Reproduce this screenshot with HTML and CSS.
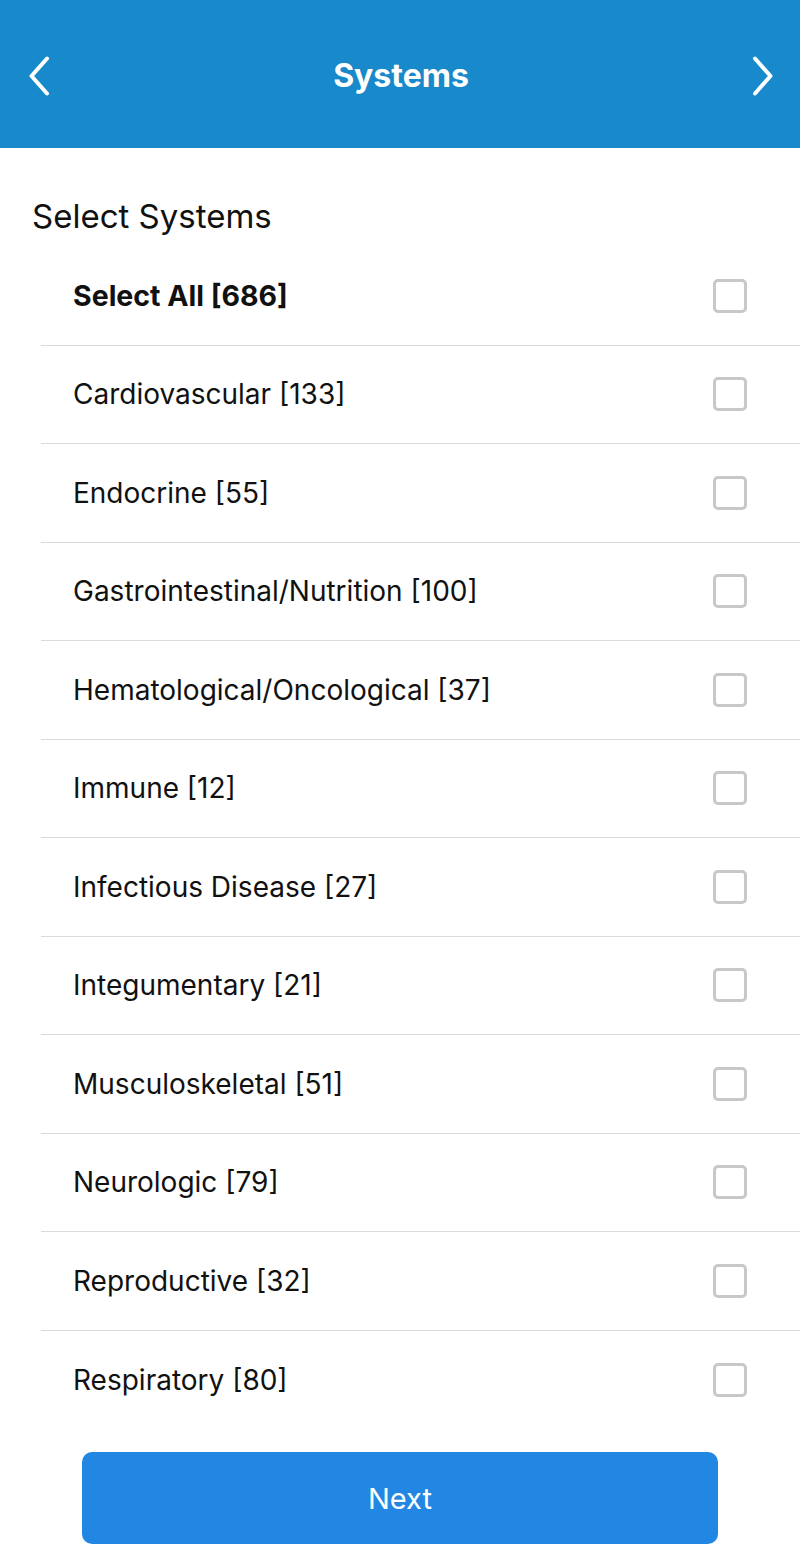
FILE: index.html
```html
<!DOCTYPE html>
<html lang="en">
<head>
<meta charset="utf-8">
<title>Systems</title>
<link rel="stylesheet" href="styles.css">
</head>
<body>
<header class="nav">
  <button class="nav-btn" aria-label="Back">
    <svg width="28" height="40" viewBox="0 0 28 40"><path d="M21 2.5 L5.5 20 L21 37.5" fill="none" stroke="#fff" stroke-width="4" stroke-linecap="round" stroke-linejoin="round"/></svg>
  </button>
  <h1 class="nav-title">Systems</h1>
  <button class="nav-btn" aria-label="Forward">
    <svg width="28" height="40" viewBox="0 0 28 40"><path d="M7 2.5 L22.5 20 L7 37.5" fill="none" stroke="#fff" stroke-width="4" stroke-linecap="round" stroke-linejoin="round"/></svg>
  </button>
</header>
<main>
  <h2 class="section-title">Select Systems</h2>
  <ul class="list">
    <li class="row row-all"><span>Select All [686]</span><span class="check"></span></li>
    <li class="row"><span>Cardiovascular [133]</span><span class="check"></span></li>
    <li class="row"><span>Endocrine [55]</span><span class="check"></span></li>
    <li class="row"><span>Gastrointestinal/Nutrition [100]</span><span class="check"></span></li>
    <li class="row"><span>Hematological/Oncological [37]</span><span class="check"></span></li>
    <li class="row"><span>Immune [12]</span><span class="check"></span></li>
    <li class="row"><span>Infectious Disease [27]</span><span class="check"></span></li>
    <li class="row"><span>Integumentary [21]</span><span class="check"></span></li>
    <li class="row"><span>Musculoskeletal [51]</span><span class="check"></span></li>
    <li class="row"><span>Neurologic [79]</span><span class="check"></span></li>
    <li class="row"><span>Reproductive [32]</span><span class="check"></span></li>
    <li class="row"><span>Respiratory [80]</span><span class="check"></span></li>
  </ul>
  <div class="actions">
    <button class="next">Next</button>
  </div>
</main>
</body>
</html>
```

FILE: styles.css
```css
* { box-sizing: border-box; }
html, body {
  margin: 0;
  padding: 0;
  background: #fff;
  font-family: Inter, "Liberation Sans", Arial, sans-serif;
  color: #111;
}
.nav {
  height: 148px;
  background: #1889ca;
  display: flex;
  align-items: center;
  justify-content: space-between;
  padding: 0 18px 0 20px;
}
.nav-btn {
  background: none;
  border: 0;
  padding: 0;
  width: 40px;
  height: 40px;
  display: flex;
  align-items: center;
  justify-content: center;
  margin-top: 4px;
}
.nav-title {
  margin: 0;
  color: #fff;
  font-size: 32px;
  font-weight: 700;
  margin-top: 2px;
}
.section-title {
  margin: 0;
  padding: 48px 0 11px 32px;
  font-size: 33px;
  line-height: 40px;
  font-weight: 400;
  color: #111;
}
.list {
  list-style: none;
  margin: 0 0 0 41px;
  padding: 0;
}
.row {
  height: 98.5px;
  display: flex;
  align-items: center;
  justify-content: space-between;
  padding: 0 53px 0 32px;
  border-bottom: 1px solid #dadada;
  font-size: 28px;
  color: #111;
}
.row:last-child { border-bottom: 0; }
.row-all { font-weight: 700; font-size: 28.5px; }
.check {
  width: 34px;
  height: 34px;
  border: 3px solid #c8c8c8;
  border-radius: 5px;
  flex: none;
}
.actions {
  display: flex;
  justify-content: center;
  padding-top: 23px;
}
.next {
  width: 636px;
  height: 92px;
  border: 0;
  border-radius: 10px;
  background: #2287e2;
  color: #fff;
  font-family: inherit;
  font-size: 29px;
  font-weight: 400;
}
```
